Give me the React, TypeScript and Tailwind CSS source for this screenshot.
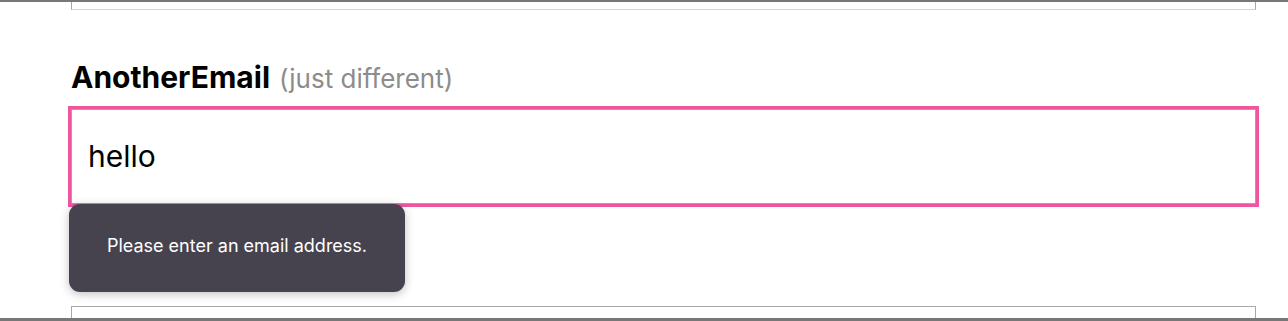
import React from 'react';

export default function App() {
  return (
    <div className="relative h-[321px] w-full overflow-hidden border-t-2 border-b-[3px] border-[#777777] bg-white font-['Inter','Liberation_Sans',sans-serif]">
      <div className="flex flex-col pl-[71px] pr-[32px]">
        {/* previous field, cut off at the top */}
        <div className="h-[8px] border-x border-b border-x-[#a8a8a8] border-b-[#d4d4d4]" />

        {/* AnotherEmail field */}
        <label className="mt-[49px] flex items-baseline gap-[9px] leading-[36px]">
          <span className="text-[30px] font-bold text-black">AnotherEmail</span>
          <span className="text-[26px] font-normal text-[#8c8c8c]">(just different)</span>
        </label>
        <div className="mt-[12px] flex h-[95px] items-center border border-[#a3a3a3] pl-[16px] text-[30px] text-black shadow-[0_0_0_3px_#ef56a0]">
          hello
        </div>

        {/* next field, cut off at the bottom */}
        <div className="mt-[102px] h-[20px] border-x border-t border-[#a8a8a8]" />
      </div>

      {/* validation tooltip */}
      <div className="absolute left-[69px] top-[202px] flex h-[88px] w-[336px] items-center justify-center rounded-[11px] bg-[#46434f] pb-[5px] text-[18px] text-white shadow-[0_2px_10px_rgba(0,0,0,0.25)]">
        Please enter an email address.
      </div>
    </div>
  );
}
